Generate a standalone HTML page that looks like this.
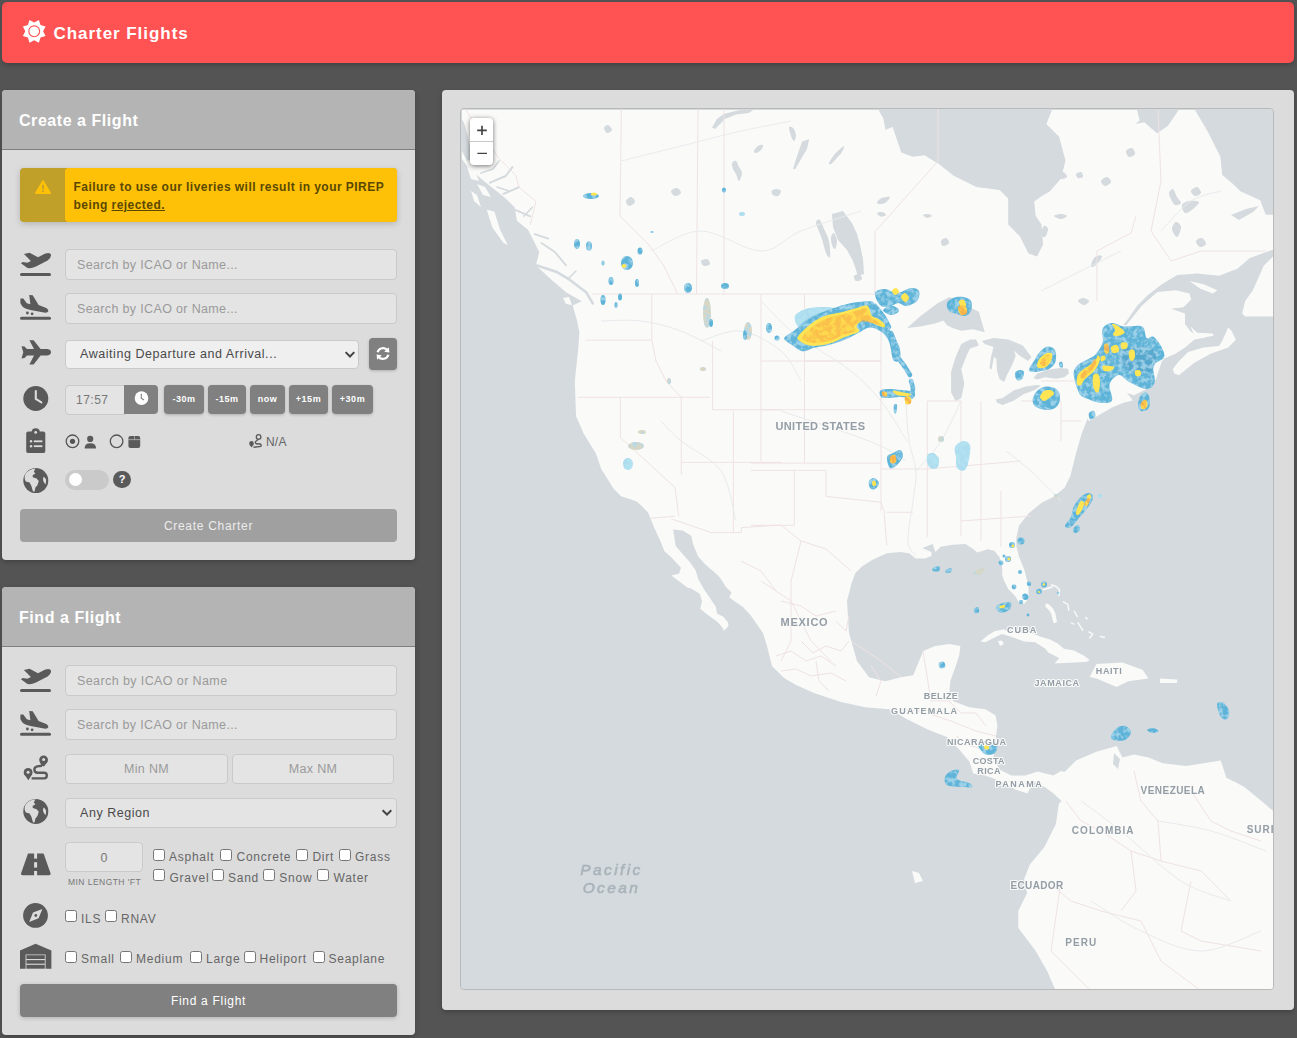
<!DOCTYPE html>
<html><head><meta charset="utf-8">
<style>
*{box-sizing:border-box}
html,body{margin:0;padding:0;width:1297px;height:1038px;overflow:hidden;background:#545454;font-family:"Liberation Sans",sans-serif;position:relative}
.abs{position:absolute}
#hdr{left:2px;top:2px;width:1292px;height:61px;background:#ff5252;border-radius:5px;box-shadow:0 2px 5px rgba(0,0,0,.22)}
#hdr .t{left:51.5px;top:21.5px;font-size:17px;font-weight:bold;color:#fff;letter-spacing:0.95px;line-height:20px;white-space:nowrap}
.panel{position:absolute;left:2px;width:413px;background:#dcdcdc;border-radius:4px;overflow:hidden;box-shadow:0 2px 5px rgba(0,0,0,.22)}
.panel .ph{position:absolute;left:0;top:0;width:100%;height:60px;background:#b4b4b4;border-bottom:1px solid #7f7f7f}
.panel .ph span{position:absolute;left:17px;top:21px;font-size:16px;font-weight:bold;color:#fff;letter-spacing:0.55px;line-height:20px;white-space:nowrap}
#p1{top:90px;height:470px}
#p2{top:587px;height:448px}
#mp{left:442px;top:90px;width:852px;height:920px;background:#dcdcdc;border-radius:4px;box-shadow:0 2px 5px rgba(0,0,0,.22)}
#map{left:460px;top:108px;width:814px;height:882px;background:#d4dadd;border:1px solid #b9b9b9;border-radius:4px;overflow:hidden}
.inp{position:absolute;background:#e4e4e4;border:1px solid #cacaca;border-radius:4px;font-size:12.5px;color:#9a9a9a;line-height:30px;padding-left:11px;white-space:nowrap;letter-spacing:0.35px}
.sel{position:absolute;background:#efefef;border:1px solid #cacaca;border-radius:4px;font-size:12.5px;color:#4a4a4a;line-height:27px;padding-left:14px;white-space:nowrap;letter-spacing:0.55px}
.btn{position:absolute;background:#808080;border-radius:4px;color:#fff;font-weight:bold;text-align:center;box-shadow:0 1px 3px rgba(0,0,0,.2)}
.ico{position:absolute}
.cbr{position:absolute;font-size:13px;color:#666;white-space:nowrap;letter-spacing:0.3px}
.cb{position:absolute;width:12px;height:12px;border:1px solid #767676;border-radius:2.5px;background:#fff}
.tb{top:385px;height:29px;font-size:9px;line-height:29px;letter-spacing:0.5px}
.cbl{position:absolute;font-size:12px;color:#666;white-space:nowrap;line-height:16px;letter-spacing:0.75px;margin-top:1.5px}
.lbl{position:absolute;font-size:13px;color:#6a6a6a;white-space:nowrap;line-height:16px;letter-spacing:0.3px}
</style></head><body>
<div id="hdr" class="abs">
  <svg class="abs" style="left:-2px;top:-2px" width="60" height="60" viewBox="0 0 60 60">
    <polygon fill="#fff" points="38.91,19.94 40.49,25.01 45.56,26.59 43.10,31.30 45.56,36.01 40.49,37.59 38.91,42.66 34.20,40.20 29.49,42.66 27.91,37.59 22.84,36.01 25.30,31.30 22.84,26.59 27.91,25.01 29.49,19.94 34.20,22.40"/>
    <circle cx="34.2" cy="31.3" r="5.4" fill="none" stroke="#ff5252" stroke-width="1.1"/>
  </svg>
  <div class="abs t">Charter Flights</div>
</div>

<div id="p1" class="panel">
  <div class="ph"><span>Create a Flight</span></div>
</div>

<div id="p2" class="panel">
  <div class="ph"><span>Find a Flight</span></div>
</div>

<div id="mp" class="abs"></div>

<!-- ===== CREATE A FLIGHT FORM ===== -->
<div class="abs" style="left:20px;top:168px;width:377px;height:54px;background:#c1a02a;border-radius:4px;box-shadow:0 2px 6px rgba(0,0,0,.18);overflow:hidden">
  <div class="abs" style="left:45px;top:0;width:332px;height:54px;background:#ffc107;border-radius:4px 0 0 4px"></div>
  <svg class="abs" style="left:14px;top:11px" width="18" height="16" viewBox="0 0 18 16"><path d="M9 1.8 L16.3 14.2 L1.7 14.2 Z" fill="#ffc107" stroke="#ffc107" stroke-width="1.4" stroke-linejoin="round"/><rect x="8.15" y="5.8" width="1.7" height="4.6" fill="#c1a02a"/><rect x="8.15" y="11.4" width="1.7" height="1.7" fill="#c1a02a"/></svg>
  <div class="abs" style="left:53.5px;top:9.5px;font-size:12px;font-weight:bold;color:#5a4800;letter-spacing:0.45px;line-height:18px;white-space:nowrap">Failure to use our liveries will result in your PIREP<br>being <u>rejected.</u></div>
</div>

<div class="inp" style="left:65px;top:249px;width:332px;height:31px">Search by ICAO or Name...</div>
<div class="inp" style="left:65px;top:293px;width:332px;height:31px">Search by ICAO or Name...</div>
<div class="sel" style="left:65px;top:340px;width:294px;height:29px">Awaiting Departure and Arrival...</div>
<svg class="abs" style="left:340px;top:345px" width="20" height="16" viewBox="340 345 20 16"><path d="M345.6 352.1 L350 356.5 L354.3 352.1" fill="none" stroke="#444" stroke-width="2"/></svg>
<div class="btn" style="left:369px;top:338px;width:28px;height:32px"></div>
<svg class="abs" style="left:369px;top:338px" width="28" height="32" viewBox="0 0 28 32">
  <path d="M8.6 14.2 A5.8 5.8 0 0 1 18.6 12.2" fill="none" stroke="#fff" stroke-width="2.2"/>
  <path d="M19.9 9.2 L20.4 14.6 L15.2 13.8 Z" fill="#fff"/>
  <path d="M19.4 16.8 A5.8 5.8 0 0 1 9.4 18.8" fill="none" stroke="#fff" stroke-width="2.2"/>
  <path d="M8.1 21.8 L7.6 16.4 L12.8 17.2 Z" fill="#fff"/>
</svg>

<div class="inp" style="left:65px;top:385px;width:60px;height:30px;border-radius:4px 0 0 4px;color:#777;padding-left:10px;letter-spacing:0.5px;font-size:12px;line-height:29px">17:57</div>
<div class="abs" style="left:124px;top:385px;width:34px;height:29px;background:#808080;border-radius:0 4px 4px 0"></div>
<svg class="abs" style="left:130px;top:387px" width="24" height="24" viewBox="130 387 24 24"><circle cx="141.5" cy="398.1" r="6.8" fill="#fff"/><path d="M141.3 393.8 L141.3 398.3 L144 400" fill="none" stroke="#808080" stroke-width="1.1"/></svg>

<div class="btn tb" style="left:164px;width:40px">-30m</div>
<div class="btn tb" style="left:208px;width:38px">-15m</div>
<div class="btn tb" style="left:250px;width:35px">now</div>
<div class="btn tb" style="left:289px;width:39px">+15m</div>
<div class="btn tb" style="left:332px;width:41px">+30m</div>

<svg class="abs" style="left:60px;top:430px" width="90" height="25" viewBox="60 430 90 25">
  <circle cx="72.5" cy="441.3" r="6.3" fill="none" stroke="#555" stroke-width="1.3"/>
  <circle cx="72.5" cy="441.3" r="2.6" fill="#555"/>
  <circle cx="90.2" cy="438.9" r="3.1" fill="#5a5a5a"/>
  <path d="M84.6 448.6 Q84.6 443.2 90.3 443.2 Q96.1 443.2 96.1 448.6 Z" fill="#5a5a5a"/>
  <circle cx="116.6" cy="441.3" r="6.3" fill="none" stroke="#555" stroke-width="1.3"/>
  <rect x="128.4" y="436.1" width="11.8" height="11.8" rx="2" fill="#5a5a5a"/>
  <rect x="128.4" y="439.3" width="11.8" height="0.8" fill="#dcdcdc" opacity="0.7"/>
  <rect x="134" y="436.1" width="0.7" height="3.4" fill="#dcdcdc" opacity="0.7"/>
</svg>
<svg class="abs" style="left:246px;top:432px" width="18" height="18" viewBox="246 432 18 18">
  <circle cx="251.5" cy="443.4" r="2.3" fill="#5a5a5a"/><path d="M249.4 444.5 L251.6 447.6 L253.6 444.5 Z" fill="#5a5a5a"/>
  <circle cx="258.6" cy="436.9" r="2.3" fill="none" stroke="#5a5a5a" stroke-width="1.3"/>
  <path d="M258.5 439.2 L256.5 440.8 Q254.3 442.4 256.3 443.8 L260 444 Q261.8 444.8 260.8 446.4 L253.5 447.3" fill="none" stroke="#5a5a5a" stroke-width="1.4"/>
</svg>
<div class="lbl" style="left:266px;top:434px;font-size:12px;color:#666;letter-spacing:0.2px">N/A</div>

<div class="abs" style="left:65px;top:470px;width:44px;height:20px;background:#cacaca;border-radius:10px"></div>
<div class="abs" style="left:68.8px;top:473.2px;width:13.2px;height:13.2px;background:#fff;border-radius:50%"></div>
<div class="abs" style="left:113.3px;top:470.8px;width:17.4px;height:17.4px;background:#5a5a5a;border-radius:50%;color:#fff;font-weight:bold;font-size:11px;line-height:17.4px;text-align:center">?</div>

<div class="abs" style="left:20px;top:509px;width:377px;height:33px;background:#a0a0a0;border-radius:4px;color:#ececec;font-size:12px;line-height:35px;text-align:center;letter-spacing:0.7px">Create Charter</div>


<!-- ===== LEFT ICONS ===== -->
<svg class="abs" style="left:0;top:0" width="60" height="1038" viewBox="0 0 60 1038">
 <g id="dep" fill="#5a5a5a">
  <rect x="20" y="272.9" width="31" height="3" rx="1.5"/>
  <path d="M23.9 253.9 L29.6 252.8 L38 257.2 L44.8 253.8 Q50.2 251.8 51 254.8 Q51.4 257.6 47.6 260.6 L36 266.6 Q31.4 268.6 27.4 268 L20.9 263.3 L22.8 262 L27.4 262.7 L30.9 260.9 Z"/>
 </g>
 <g id="arr" fill="#5a5a5a">
  <rect x="20" y="316.8" width="31" height="3" rx="1.5"/>
  <circle cx="27.4" cy="313" r="1.4"/><circle cx="32.1" cy="313.8" r="1.4"/>
  <path d="M20.4 298.4 L23.3 298.5 L26.8 303.2 L30.4 304.2 L29.2 295 L32.7 295.2 L38.6 305 L45 307.6 Q48.8 309.2 48.2 311.6 Q47.4 313.2 44 312.6 L30.5 310 Q24.6 308.6 22.2 306.2 L20.4 303.3 Z"/>
 </g>
 <path fill="#5a5a5a" d="M21.5 346.2 L24.5 346.6 L27 349 L34 349 L29.4 340.3 L33.6 340.3 L40.6 349 L47.5 349 Q51 349.6 51 352.2 Q51 354.8 47.5 355.4 L40.6 355.4 L33.6 364.4 L29.4 364.4 L34 355.4 L27 355.4 L24.5 358 L21.5 358.4 L23.3 352.2 Z"/>
 <g><circle cx="35.8" cy="398.5" r="12.5" fill="#5a5a5a"/><path d="M35.8 391 L35.8 399 L41.4 402.4" fill="none" stroke="#dcdcdc" stroke-width="2.1" stroke-linecap="round"/></g>
 <g fill="#5a5a5a">
  <rect x="26.2" y="431.4" width="19.1" height="21.7" rx="2.2"/>
  <path d="M31.6 432 Q31.6 428.2 35.7 428.2 Q39.8 428.2 39.8 432 Z"/>
  <circle cx="35.7" cy="432.4" r="1.4" fill="#dcdcdc"/>
  <circle cx="31" cy="441.3" r="1.2" fill="#dcdcdc"/><circle cx="31" cy="446.2" r="1.2" fill="#dcdcdc"/>
  <rect x="33.8" y="440.4" width="8.6" height="1.8" fill="#dcdcdc"/><rect x="33.8" y="445.3" width="8.6" height="1.8" fill="#dcdcdc"/>
 </g>
 <g id="globe1">
  <circle cx="35.8" cy="480.6" r="12.5" fill="#5a5a5a"/>
  <path fill="#dcdcdc" d="M25.6 473.6 Q29.5 468.8 35.4 468.4 L33.8 471.8 L35.4 473.4 L32.6 475.2 L32.8 477.2 L36.6 478.4 L38.8 481 L37.4 485.2 L35.4 487.6 L34.6 491.4 L33 491.6 L31.4 486 L29.6 482.6 L25.8 481.6 Q24.2 479 24.6 476.6 Z"/>
  <path fill="#dcdcdc" d="M43.4 476.8 Q45.2 477.2 46 479.6 Q46.4 482.8 45.4 484.4 Q43.6 482.4 43 480 Z"/>
 </g>
 <use href="#dep" transform="translate(0,416)"/>
 <use href="#arr" transform="translate(0,416)"/>
 <g>
  <circle cx="28.1" cy="772.4" r="4.4" fill="#5a5a5a"/><path d="M24.2 774.2 L28.4 780.2 L32 774.2 Z" fill="#5a5a5a"/><circle cx="28.1" cy="772.2" r="1.5" fill="#dcdcdc"/>
  <circle cx="43.6" cy="759.8" r="4.4" fill="#5a5a5a"/><path d="M39.8 761.6 L41.4 765.4 L44 766.4 L47.6 761.6 Z" fill="#5a5a5a"/><circle cx="43.6" cy="759.6" r="1.5" fill="#dcdcdc"/>
  <path d="M42 765.8 L37.2 766.4 Q34.4 767.2 34.4 769.6 Q34.4 772.8 37.6 772.8 L44.6 772.8 Q46.8 773.2 46.8 775.6 Q46.8 778.4 44.2 778.4 L31.6 778.4" fill="none" stroke="#5a5a5a" stroke-width="2.4"/>
 </g>
 <use href="#globe1" transform="translate(0,330.8)"/>
 <g fill="#5a5a5a">
  <path d="M28 853.6 L43.6 853.6 L50.6 873.6 Q50.8 875.2 49 875.2 L22.6 875.2 Q20.8 875.2 21 873.6 Z"/>
  <rect x="34.1" y="853" width="3" height="5.6" fill="#dcdcdc"/><rect x="34.1" y="862.2" width="3" height="5.4" fill="#dcdcdc"/><rect x="34.1" y="871" width="3" height="5" fill="#dcdcdc"/>
 </g>
 <g>
  <circle cx="35.5" cy="915.4" r="12.4" fill="#5a5a5a"/>
  <path d="M29.2 922 L33 912.6 L42.4 909 L38.6 918.2 Z" fill="#dcdcdc"/>
  <circle cx="35.8" cy="915.5" r="1.4" fill="#5a5a5a"/>
 </g>
 <g>
  <path d="M20 950.4 L35.6 943.8 L51.4 950.4 L51.4 968.7 L45.6 968.7 L45.6 954.4 L25.6 954.4 L25.6 968.7 L20 968.7 Z" fill="#5a5a5a"/>
  <rect x="26.4" y="955.2" width="18.4" height="3.8" fill="#5a5a5a"/>
  <rect x="26.4" y="960.1" width="18.4" height="3.6" fill="#5a5a5a"/>
  <rect x="26.4" y="964.8" width="18.4" height="3.9" fill="#5a5a5a"/>
 </g>
</svg>

<!-- ===== CHECKBOXES ===== -->
<div class="cb" style="left:153px;top:849px"></div><div class="cbl" style="left:169px;top:847px">Asphalt</div>
<div class="cb" style="left:220px;top:849px"></div><div class="cbl" style="left:236.5px;top:847px">Concrete</div>
<div class="cb" style="left:296px;top:849px"></div><div class="cbl" style="left:312.4px;top:847px">Dirt</div>
<div class="cb" style="left:338.5px;top:849px"></div><div class="cbl" style="left:355px;top:847px">Grass</div>
<div class="cb" style="left:153px;top:869px"></div><div class="cbl" style="left:169.5px;top:868px">Gravel</div>
<div class="cb" style="left:212px;top:869px"></div><div class="cbl" style="left:228px;top:868px">Sand</div>
<div class="cb" style="left:263px;top:869px"></div><div class="cbl" style="left:279.3px;top:868px">Snow</div>
<div class="cb" style="left:317px;top:869px"></div><div class="cbl" style="left:333.5px;top:868px">Water</div>
<div class="cb" style="left:65px;top:910px"></div><div class="cbl" style="left:81px;top:909px">ILS</div>
<div class="cb" style="left:105px;top:910px"></div><div class="cbl" style="left:121px;top:909px">RNAV</div>
<div class="cb" style="left:65px;top:951px"></div><div class="cbl" style="left:81px;top:949px">Small</div>
<div class="cb" style="left:120px;top:951px"></div><div class="cbl" style="left:136px;top:949px">Medium</div>
<div class="cb" style="left:189.5px;top:951px"></div><div class="cbl" style="left:206px;top:949px">Large</div>
<div class="cb" style="left:243.5px;top:951px"></div><div class="cbl" style="left:259.5px;top:949px">Heliport</div>
<div class="cb" style="left:313px;top:951px"></div><div class="cbl" style="left:328.5px;top:949px">Seaplane</div>

<!-- ===== FIND A FLIGHT FORM ===== -->
<div class="inp" style="left:65px;top:665px;width:332px;height:31px;letter-spacing:0.4px">Search by ICAO or Name</div>
<div class="inp" style="left:65px;top:709px;width:332px;height:31px">Search by ICAO or Name...</div>
<div class="inp" style="left:65px;top:754px;width:163px;height:30px;padding:0;text-align:center;line-height:29px">Min NM</div>
<div class="inp" style="left:232px;top:754px;width:162px;height:30px;padding:0;text-align:center;line-height:29px">Max NM</div>
<div class="sel" style="left:65px;top:798px;width:332px;height:30px;background:#e4e4e4;line-height:28px">Any Region</div>
<svg class="abs" style="left:377px;top:805px" width="16" height="16" viewBox="377 805 16 16"><path d="M382.6 810.3 L387 814.5 L391.3 810.3" fill="none" stroke="#444" stroke-width="2"/></svg>
<div class="inp" style="left:65px;top:842px;width:78px;height:30px;padding:0;text-align:center;color:#777;letter-spacing:0;font-size:12.5px">0</div>
<div class="lbl" style="left:68px;top:876px;font-size:8.5px;color:#777;letter-spacing:0.45px;line-height:12px">MIN LENGTH 'FT</div>

<div class="btn" style="left:20px;top:984px;width:377px;height:33px;color:#fff;font-weight:normal;font-size:12px;line-height:34px;letter-spacing:0.7px;box-shadow:0 1px 4px rgba(0,0,0,.2)">Find a Flight</div>

<div id="map" class="abs">
<svg class="abs" style="left:0;top:0" width="814" height="882" viewBox="460 108 814 882">
<defs><filter id="bl" x="-10%" y="-10%" width="120%" height="120%"><feTurbulence type="fractalNoise" baseFrequency="0.22" numOctaves="2" seed="7" result="n"/><feColorMatrix in="n" type="matrix" values="0 0 0 0 0  0 0 0 0 0  0 0 0 0 0  0 0 0 -4 2.3" result="m"/><feFlood flood-color="#a9d9ee" flood-opacity="0.75"/><feComposite in2="m" operator="in" result="lt"/><feComposite in="lt" in2="SourceGraphic" operator="in" result="lt2"/><feMerge result="mg"><feMergeNode in="SourceGraphic"/><feMergeNode in="lt2"/></feMerge><feGaussianBlur in="mg" stdDeviation="0.5"/></filter><filter id="bl2" x="-20%" y="-20%" width="140%" height="140%"><feGaussianBlur stdDeviation="0.5"/></filter><filter id="bl3" x="-10%" y="-10%" width="120%" height="120%"><feTurbulence type="fractalNoise" baseFrequency="0.2" numOctaves="2" seed="11" result="n"/><feColorMatrix in="n" type="matrix" values="0 0 0 0 0  0 0 0 0 0  0 0 0 0 0  0 0 0 -4.5 2.6" result="m"/><feFlood flood-color="#ffe552" flood-opacity="0.85"/><feComposite in2="m" operator="in" result="lt"/><feComposite in="lt" in2="SourceGraphic" operator="in" result="lt2"/><feMerge result="mg"><feMergeNode in="SourceGraphic"/><feMergeNode in="lt2"/></feMerge><feGaussianBlur in="mg" stdDeviation="0.5"/></filter></defs>
<rect x="460" y="108" width="814" height="882" fill="#d4dadd"/>
<polygon fill="#fafaf9" points="461.0,109.0 877.6,109.0 882.2,117.3 884.5,128.8 891.6,126.0 900.3,151.4 911.8,155.7 923.4,154.2 937.9,163.0 952.3,174.5 975.4,186.0 998.6,189.0 1007.2,197.6 1007.2,223.6 1018.8,235.2 1027.5,252.5 1036.0,255.4 1042.0,243.8 1040.5,223.6 1034.7,215.0 1033.2,200.5 1040.0,195.6 1049.0,190.2 1060.0,177.5 1064.5,159.4 1058.1,135.8 1045.4,123.1 1050.9,109.0 1136.0,109.0 1138.7,119.5 1134.2,123.1 1143.3,121.3 1156.0,132.2 1166.8,124.9 1177.7,109.0 1194.0,109.0 1206.7,130.4 1219.4,155.7 1221.2,173.9 1232.0,182.9 1239.3,190.2 1259.2,199.2 1264.7,213.7 1274.0,213.7 1274.0,248.0 1248.8,257.0 1236.4,267.8 1218.0,274.7 1196.4,272.4 1176.3,273.9 1160.9,283.2 1147.0,294.0 1136.2,304.8 1125.4,320.2 1122.3,324.0 1125.4,324.0 1140.8,304.8 1156.3,290.9 1174.8,289.3 1188.6,292.4 1190.2,298.6 1182.5,306.3 1170.1,307.8 1184.0,312.5 1184.0,323.3 1190.2,331.0 1196.4,334.1 1205.6,336.0 1193.3,338.7 1184.0,346.4 1174.8,352.6 1164.0,357.2 1160.9,360.3 1154.7,378.8 1145.5,388.0 1133.1,394.2 1126.0,392.0 1128.3,394.8 1131.7,399.4 1122.5,401.7 1111.0,406.4 1087.8,420.0 1086.7,417.3 1081.0,431.8 1075.1,452.0 1069.4,475.1 1063.6,486.7 1051.8,496.2 1041.0,501.6 1027.5,512.4 1018.0,524.5 1015.3,536.7 1015.3,544.8 1018.0,555.6 1023.4,569.0 1027.5,585.3 1027.5,597.4 1023.4,602.8 1018.0,601.5 1014.0,594.7 1007.2,588.0 1003.2,580.0 1000.5,571.8 1001.2,574.6 1001.2,566.7 998.6,556.2 993.3,549.7 986.8,548.3 976.3,551.6 972.4,548.3 964.5,543.1 951.4,543.8 939.6,545.7 934.4,551.0 931.7,543.1 921.3,547.0 930.4,551.0 930.4,554.9 923.9,557.5 914.7,557.5 908.2,552.3 899.0,551.0 885.9,552.3 871.5,558.8 861.0,565.4 854.4,571.9 850.5,582.4 846.0,600.0 848.0,632.0 856.0,660.0 868.0,676.2 884.1,680.2 900.1,676.2 912.2,674.2 922.2,650.1 934.2,645.1 948.3,643.1 959.3,645.1 958.3,654.1 954.3,666.2 949.3,680.2 948.3,692.2 952.3,700.2 968.3,706.3 984.3,708.3 994.4,714.3 996.4,724.3 994.4,740.3 992.4,756.4 998.4,768.4 1010.4,774.4 1024.4,774.4 1036.5,770.4 1052.5,774.4 1060.0,770.0 1063.6,771.0 1075.1,759.4 1095.4,750.7 1115.6,744.9 1121.4,756.5 1133.0,753.6 1147.4,756.5 1161.8,762.3 1185.0,765.1 1202.3,762.3 1219.7,759.4 1225.4,776.7 1242.8,785.4 1260.1,799.8 1274.0,811.4 1274.0,990.0 1054.9,990.0 1046.2,970.3 1034.7,950.1 1017.3,927.0 1017.3,909.7 1026.0,892.3 1023.1,877.9 1028.9,863.4 1043.4,846.0 1054.9,823.0 1057.8,802.7 1060.5,800.0 1052.5,792.5 1044.5,786.5 1032.5,780.4 1026.4,792.5 1014.4,788.5 1000.4,780.4 984.3,774.4 972.3,772.4 968.3,760.4 958.3,748.4 946.3,736.3 926.2,728.3 906.2,718.3 888.1,708.3 864.1,706.3 840.0,701.0 813.0,692.0 795.0,684.0 783.0,677.0 771.0,665.0 766.0,645.0 762.0,632.0 750.0,614.7 742.0,606.0 733.4,600.2 728.2,596.2 730.5,591.6 724.7,585.8 720.0,578.0 716.3,573.7 704.1,563.3 697.2,555.5 692.0,543.3 690.3,534.7 681.6,529.5 672.1,528.6 674.7,545.1 681.6,552.9 688.5,560.7 694.6,569.3 697.2,578.0 704.1,590.0 709.1,597.3 714.9,606.0 716.0,612.4 722.4,615.8 727.0,621.6 727.6,625.1 723.0,629.7 721.2,626.2 716.0,620.5 706.2,613.5 699.2,607.7 701.0,600.2 698.7,592.7 690.0,587.5 686.8,586.7 677.3,579.7 670.3,574.5 678.1,572.8 679.9,566.7 670.3,556.3 663.4,550.3 660.0,541.6 653.0,526.0 646.9,511.3 640.0,504.3 635.2,500.3 620.1,495.3 612.6,487.7 600.1,467.7 595.1,452.7 582.6,432.6 575.0,415.1 573.8,380.0 577.0,350.0 578.4,331.5 576.2,320.3 571.7,304.6 580.7,300.2 565.0,291.2 549.4,277.8 534.9,264.4 538.2,251.0 531.5,237.6 527.0,228.7 515.9,219.7 513.6,206.3 504.7,197.4 493.5,188.4 482.3,179.5 466.7,166.0 461.0,158.0"/>
<polygon fill="#fafaf9" points="1241.1,312.5 1244.2,300.1 1251.9,289.3 1262.7,264.7 1274.0,253.5 1274.0,315.6 1258.0,315.6 1244.2,315.6"/>
<polygon fill="#fafaf9" points="1171.7,368.0 1177.8,360.3 1187.1,351.0 1202.5,346.4 1218.0,344.9 1221.0,340.2 1227.2,326.4 1230.3,329.4 1234.9,338.7 1227.2,346.4 1210.2,352.6 1193.3,361.8 1177.8,374.2 1173.2,372.6"/>
<polygon fill="#fafaf9" points="1189.4,325.6 1196.4,331.7 1211.8,332.5 1212.5,334.8 1202.5,336.4 1193.3,334.1"/>
<polygon fill="#fafaf9" points="979.6,640.4 986.1,634.8 993.5,630.2 1002.8,628.3 1006.5,630.2 1016.6,632.0 1030.5,632.0 1039.8,635.7 1049.0,638.5 1056.4,642.2 1062.9,647.8 1073.0,649.6 1082.3,654.2 1088.8,658.9 1086.0,660.7 1073.0,661.6 1053.6,662.6 1058.3,657.0 1047.2,651.5 1044.4,647.8 1034.2,641.3 1023.1,640.4 1010.2,635.7 1000.9,633.0 991.7,637.6 984.3,641.3"/>
<polygon fill="#fafaf9" points="997.0,640.0 1001.0,639.4 1002.8,643.0 999.0,645.0"/>
<polygon fill="#fafaf9" points="1088.6,676.0 1095.4,663.0 1121.4,661.6 1141.6,668.8 1147.4,677.5 1127.2,680.3 1115.6,686.1 1095.4,677.5"/>
<polygon fill="#fafaf9" points="1159.0,677.5 1176.3,678.5 1176.0,682.0 1159.0,682.0"/>
<polygon fill="#fafaf9" points="1042.0,680.0 1058.0,679.0 1064.0,683.0 1050.0,684.5"/>
<polygon fill="#fafaf9" points="485.7,208.6 493.5,210.8 499.1,228.7 506.9,244.3 502.5,242.0 491.3,226.4"/>
<polygon fill="#fafaf9" points="911.0,870.0 918.0,872.0 922.0,880.0 914.0,882.0"/>
<polygon fill="#fafaf9" points="1188.6,280.1 1202.5,283.2 1216.4,289.3 1211.8,292.4 1199.4,287.8"/>
<polyline points="1042.4,588.5 1050.8,586.2" fill="none" stroke="#fafaf9" stroke-width="1.8" stroke-linecap="round" stroke-linejoin="round"/>
<polyline points="1050.8,583.9 1055.0,585.5 1058.5,588.5 1057.8,594.7" fill="none" stroke="#fafaf9" stroke-width="1.6" stroke-linecap="round" stroke-linejoin="round"/>
<polyline points="1046.2,604.7 1050.5,609.0 1052.4,613.0 1053.9,620.1" fill="none" stroke="#fafaf9" stroke-width="4" stroke-linecap="round" stroke-linejoin="round"/>
<polyline points="1062.4,600.8 1067.0,603.5 1067.8,609.3" fill="none" stroke="#fafaf9" stroke-width="1.4" stroke-linecap="round" stroke-linejoin="round"/>
<polyline points="1073.2,610.1 1076.3,615.5" fill="none" stroke="#fafaf9" stroke-width="1.4" stroke-linecap="round" stroke-linejoin="round"/>
<polyline points="1077.0,621.7 1081.7,629.4" fill="none" stroke="#fafaf9" stroke-width="1.4" stroke-linecap="round" stroke-linejoin="round"/>
<polyline points="1070.0,621.7 1073.2,623.2" fill="none" stroke="#fafaf9" stroke-width="1.2" stroke-linecap="round" stroke-linejoin="round"/>
<polyline points="1087.8,630.9 1091.7,633.2 1088.6,637.0" fill="none" stroke="#fafaf9" stroke-width="1.4" stroke-linecap="round" stroke-linejoin="round"/>
<polyline points="1099.4,635.5 1103.3,636.3" fill="none" stroke="#fafaf9" stroke-width="1.4" stroke-linecap="round" stroke-linejoin="round"/>
<polyline points="1085.0,616.5 1086.0,617.8" fill="none" stroke="#fafaf9" stroke-width="1.6" stroke-linecap="round" stroke-linejoin="round"/>
<polyline points="489.0,181.7 504.7,175.0 511.4,166.1" fill="none" stroke="#d4dadd" stroke-width="2" stroke-linecap="round" stroke-linejoin="round"/>
<polyline points="502.5,192.9 518.1,186.2" fill="none" stroke="#d4dadd" stroke-width="2" stroke-linecap="round" stroke-linejoin="round"/>
<polyline points="513.6,208.6 529.3,215.3" fill="none" stroke="#d4dadd" stroke-width="1.8" stroke-linecap="round" stroke-linejoin="round"/>
<polyline points="522.6,215.3 531.5,206.3" fill="none" stroke="#d4dadd" stroke-width="1.5" stroke-linecap="round" stroke-linejoin="round"/>
<polyline points="533.7,233.1 547.2,237.6" fill="none" stroke="#d4dadd" stroke-width="1.8" stroke-linecap="round" stroke-linejoin="round"/>
<polyline points="540.4,242.1 553.9,251.0 565.0,264.4" fill="none" stroke="#d4dadd" stroke-width="1.8" stroke-linecap="round" stroke-linejoin="round"/>
<polyline points="536.0,264.4 556.0,271.1 567.3,277.8 585.1,291.2 591.8,302.4" fill="none" stroke="#d4dadd" stroke-width="2.6" stroke-linecap="round" stroke-linejoin="round"/>
<polyline points="567.3,277.8 575.0,270.0" fill="none" stroke="#d4dadd" stroke-width="1.5" stroke-linecap="round" stroke-linejoin="round"/>
<polyline points="480.0,172.0 492.0,168.0 498.0,160.0" fill="none" stroke="#d4dadd" stroke-width="1.8" stroke-linecap="round" stroke-linejoin="round"/>
<polyline points="496.0,186.0 508.0,190.0" fill="none" stroke="#d4dadd" stroke-width="1.5" stroke-linecap="round" stroke-linejoin="round"/>
<polygon fill="#fafaf9" points="466.0,166.0 474.0,170.0 478.0,180.0 470.0,178.0"/>
<polygon fill="#fafaf9" points="476.0,183.0 484.0,186.0 490.0,196.0 482.0,194.0"/>
<polygon fill="#fafaf9" points="470.0,190.0 476.0,194.0 480.0,206.0 473.0,200.0"/>
<polygon fill="#fafaf9" points="562.0,297.0 568.0,296.0 571.0,304.0 565.0,303.0"/>
<polygon fill="#d4dadd" points="711.0,126.5 716.0,118.0 722.6,113.0 738.8,109.0 752.0,109.0 748.0,112.0 735.0,113.5 724.0,118.0 714.0,128.0"/>
<polygon fill="#d4dadd" points="792.0,168.0 797.0,152.0 801.2,140.4 808.2,138.0 806.0,148.0 800.0,158.0 794.3,168.0"/>
<polygon fill="#d4dadd" points="831.0,213.0 842.0,210.0 851.0,222.0 856.0,233.0 859.0,244.0 862.0,258.0 863.0,273.0 857.0,275.0 852.0,260.0 846.0,249.0 837.0,239.0 832.0,226.0"/>
<polygon fill="#d4dadd" points="906.1,326.9 919.3,315.2 936.9,302.0 948.6,296.1 954.5,299.0 963.3,297.6 969.1,306.4 977.9,310.8 980.8,321.0 983.8,331.3 972.0,328.3 960.3,329.8 951.5,326.9 945.7,324.0 942.7,319.6 934.0,322.5 919.3,325.4"/>
<polygon fill="#d4dadd" points="975.0,338.6 977.9,344.5 969.1,347.4 966.2,353.2 960.3,367.9 963.3,382.5 960.3,397.2 954.5,400.1 950.1,391.3 950.1,370.8 954.5,356.2 960.3,343.0 969.1,338.6"/>
<polygon fill="#d4dadd" points="980.8,340.0 992.5,337.1 1007.2,338.6 1021.8,344.5 1030.6,356.2 1027.0,360.0 1017.8,353.9 1013.1,349.5 1014.6,355.0 1011.6,363.1 1006.0,374.0 1003.1,380.9 998.5,378.0 996.0,370.0 995.4,358.0 993.0,356.0 990.5,368.5 988.4,367.0 990.0,356.0 992.5,346.0 983.8,343.0"/>
<polygon fill="#d4dadd" points="994.6,398.6 1001.6,397.0 1013.1,389.3 1024.7,385.5 1036.3,384.0 1040.1,384.7 1033.2,389.3 1022.4,393.2 1013.1,399.4 1001.6,404.0 996.2,401.7"/>
<polygon fill="#d4dadd" points="1032.4,377.0 1036.3,372.4 1047.8,368.5 1059.4,367.0 1067.1,367.8 1067.9,372.4 1063.2,376.2 1055.5,377.8 1044.0,376.2 1036.3,378.6"/>
<polygon fill="#d4dadd" points="1113.0,752.0 1119.0,758.0 1117.0,768.0 1112.0,763.0"/>
<polygon fill="#d4dadd" points="461.0,118.0 464.0,124.0 468.0,140.0 471.0,158.0 466.0,160.0 461.0,150.0"/>
<polygon fill="#d4dadd" points="1230.0,214.0 1245.0,208.0 1258.0,205.0 1252.0,211.0 1238.0,219.0"/>
<path fill="#d4dadd" d="M788.0,126.0 C788.3,124.7 790.8,125.7 792.0,127.0 C793.2,128.3 794.8,131.8 795.0,134.0 C795.2,136.2 793.8,139.8 793.0,140.0 C792.2,140.2 790.8,137.3 790.0,135.0 C789.2,132.7 787.7,127.3 788.0,126.0 Z"/>
<path fill="#d4dadd" d="M828.0,162.0 C828.5,160.5 831.3,156.2 833.0,154.0 C834.7,151.8 836.3,150.5 838.0,149.0 C839.7,147.5 842.5,144.7 843.0,145.0 C843.5,145.3 842.3,148.8 841.0,151.0 C839.7,153.2 836.8,156.0 835.0,158.0 C833.2,160.0 831.2,162.3 830.0,163.0 C828.8,163.7 827.5,163.5 828.0,162.0 Z"/>
<path fill="#d4dadd" d="M753.0,150.0 C753.3,148.8 755.5,146.0 757.0,145.0 C758.5,144.0 761.5,143.3 762.0,144.0 C762.5,144.7 761.2,147.7 760.0,149.0 C758.8,150.3 756.2,151.8 755.0,152.0 C753.8,152.2 752.7,151.2 753.0,150.0 Z"/>
<path fill="#d4dadd" d="M731.0,162.0 C731.5,160.7 733.8,159.3 735.0,160.0 C736.2,160.7 737.0,164.0 738.0,166.0 C739.0,168.0 741.0,169.7 741.0,172.0 C741.0,174.3 739.0,179.8 738.0,180.0 C737.0,180.2 736.0,175.0 735.0,173.0 C734.0,171.0 732.7,169.8 732.0,168.0 C731.3,166.2 730.5,163.3 731.0,162.0 Z"/>
<path fill="#d4dadd" d="M770.5,190.0 C771.0,189.0 773.4,188.0 775.0,188.0 C776.6,188.0 779.7,188.8 780.0,190.0 C780.3,191.2 778.3,194.3 777.0,195.0 C775.7,195.7 773.1,194.8 772.0,194.0 C770.9,193.2 770.0,191.0 770.5,190.0 Z"/>
<path fill="#d4dadd" d="M876.0,201.0 C876.5,200.0 878.8,197.8 881.0,197.0 C883.2,196.2 888.5,195.2 889.0,196.0 C889.5,196.8 885.8,200.8 884.0,202.0 C882.2,203.2 879.3,203.2 878.0,203.0 C876.7,202.8 875.5,202.0 876.0,201.0 Z"/>
<path fill="#d4dadd" d="M876.0,212.0 C876.2,211.2 879.5,210.7 881.0,211.0 C882.5,211.3 885.2,213.2 885.0,214.0 C884.8,214.8 881.5,215.9 880.0,215.6 C878.5,215.3 875.8,212.8 876.0,212.0 Z"/>
<path fill="#d4dadd" d="M922.0,214.0 C922.2,213.4 925.5,212.8 927.0,213.0 C928.5,213.2 931.2,214.4 931.0,215.0 C930.8,215.6 927.5,216.9 926.0,216.7 C924.5,216.5 921.8,214.6 922.0,214.0 Z"/>
<path fill="#d4dadd" d="M815.0,221.0 C815.3,219.5 817.7,217.8 819.0,219.0 C820.3,220.2 821.5,224.5 823.0,228.0 C824.5,231.5 827.0,235.3 828.0,240.0 C829.0,244.7 829.5,254.0 829.0,256.0 C828.5,258.0 826.3,255.0 825.0,252.0 C823.7,249.0 822.3,242.0 821.0,238.0 C819.7,234.0 818.0,230.8 817.0,228.0 C816.0,225.2 814.7,222.5 815.0,221.0 Z"/>
<path fill="#d4dadd" d="M830.0,236.0 C830.3,234.0 832.0,231.3 833.0,232.0 C834.0,232.7 835.8,237.3 836.0,240.0 C836.2,242.7 834.8,247.3 834.0,248.0 C833.2,248.7 831.7,246.0 831.0,244.0 C830.3,242.0 829.7,238.0 830.0,236.0 Z"/>
<path fill="#d4dadd" d="M1053.0,215.0 C1053.0,214.2 1057.8,213.0 1060.0,213.0 C1062.2,213.0 1066.0,214.2 1066.0,215.0 C1066.0,215.8 1062.2,218.0 1060.0,218.0 C1057.8,218.0 1053.0,215.8 1053.0,215.0 Z"/>
<path fill="#d4dadd" d="M1090.0,264.0 C1090.3,262.3 1092.2,257.5 1094.0,256.0 C1095.8,254.5 1100.5,254.0 1101.0,255.0 C1101.5,256.0 1098.5,260.2 1097.0,262.0 C1095.5,263.8 1093.2,265.7 1092.0,266.0 C1090.8,266.3 1089.7,265.7 1090.0,264.0 Z"/>
<path fill="#d4dadd" d="M1181.0,204.0 C1181.7,202.0 1185.2,200.5 1188.0,200.0 C1190.8,199.5 1197.3,199.7 1198.0,201.0 C1198.7,202.3 1194.3,206.2 1192.0,208.0 C1189.7,209.8 1185.8,212.7 1184.0,212.0 C1182.2,211.3 1180.3,206.0 1181.0,204.0 Z"/>
<path fill="#d4dadd" d="M1168.0,192.0 C1168.3,190.3 1170.7,187.3 1172.0,188.0 C1173.3,188.7 1174.7,193.7 1176.0,196.0 C1177.3,198.3 1180.3,200.7 1180.0,202.0 C1179.7,203.3 1175.7,204.7 1174.0,204.0 C1172.3,203.3 1171.0,200.0 1170.0,198.0 C1169.0,196.0 1167.7,193.7 1168.0,192.0 Z"/>
<path fill="#d4dadd" d="M1190.0,190.0 C1190.3,188.5 1194.3,185.7 1196.0,186.0 C1197.7,186.3 1200.3,190.5 1200.0,192.0 C1199.7,193.5 1195.7,195.3 1194.0,195.0 C1192.3,194.7 1189.7,191.5 1190.0,190.0 Z"/>
<path fill="#d4dadd" d="M1055.0,173.0 C1055.5,171.8 1060.2,170.5 1062.0,171.0 C1063.8,171.5 1066.5,174.8 1066.0,176.0 C1065.5,177.2 1060.8,178.5 1059.0,178.0 C1057.2,177.5 1054.5,174.2 1055.0,173.0 Z"/>
<path fill="#d4dadd" d="M1075.0,173.0 C1075.5,172.0 1078.8,170.5 1080.0,171.0 C1081.2,171.5 1082.5,175.0 1082.0,176.0 C1081.5,177.0 1078.2,177.5 1077.0,177.0 C1075.8,176.5 1074.5,174.0 1075.0,173.0 Z"/>
<path fill="#d4dadd" d="M1077.0,300.0 C1076.8,298.8 1080.2,297.0 1082.0,297.0 C1083.8,297.0 1087.8,298.8 1088.0,300.0 C1088.2,301.2 1084.8,304.0 1083.0,304.0 C1081.2,304.0 1077.2,301.2 1077.0,300.0 Z"/>
<path fill="#d4dadd" d="M1040.0,233.0 C1039.8,231.2 1041.8,225.8 1043.0,225.0 C1044.2,224.2 1046.8,226.2 1047.0,228.0 C1047.2,229.8 1045.2,235.2 1044.0,236.0 C1042.8,236.8 1040.2,234.8 1040.0,233.0 Z"/>
<path fill="#d4dadd" d="M960.0,130.0 C960.2,128.5 963.5,125.8 965.0,126.0 C966.5,126.2 969.2,129.5 969.0,131.0 C968.8,132.5 965.5,135.2 964.0,135.0 C962.5,134.8 959.8,131.5 960.0,130.0 Z"/>
<path fill="#d4dadd" d="M985.0,116.0 C985.2,114.5 988.5,111.8 990.0,112.0 C991.5,112.2 994.2,115.5 994.0,117.0 C993.8,118.5 990.5,121.2 989.0,121.0 C987.5,120.8 984.8,117.5 985.0,116.0 Z"/>
<path fill="#d4dadd" d="M1100.0,180.0 C1100.3,178.5 1104.3,175.8 1106.0,176.0 C1107.7,176.2 1110.3,179.5 1110.0,181.0 C1109.7,182.5 1105.7,185.2 1104.0,185.0 C1102.3,184.8 1099.7,181.5 1100.0,180.0 Z"/>
<path fill="#d4dadd" d="M1125.0,150.0 C1125.5,148.5 1129.5,146.5 1131.0,147.0 C1132.5,147.5 1134.5,151.5 1134.0,153.0 C1133.5,154.5 1129.5,156.5 1128.0,156.0 C1126.5,155.5 1124.5,151.5 1125.0,150.0 Z"/>
<path fill="#d4dadd" d="M1171.0,228.0 C1170.8,225.5 1173.5,221.3 1175.0,221.0 C1176.5,220.7 1179.8,223.5 1180.0,226.0 C1180.2,228.5 1177.5,235.7 1176.0,236.0 C1174.5,236.3 1171.2,230.5 1171.0,228.0 Z"/>
<path fill="#d4dadd" d="M1195.0,240.0 C1195.3,238.5 1199.3,236.5 1201.0,237.0 C1202.7,237.5 1205.3,241.5 1205.0,243.0 C1204.7,244.5 1200.7,246.5 1199.0,246.0 C1197.3,245.5 1194.7,241.5 1195.0,240.0 Z"/>
<path fill="#d4dadd" d="M670.0,190.0 C670.3,188.7 674.3,186.7 676.0,187.0 C677.7,187.3 680.3,190.7 680.0,192.0 C679.7,193.3 675.7,195.3 674.0,195.0 C672.3,194.7 669.7,191.3 670.0,190.0 Z"/>
<path fill="#d4dadd" d="M625.0,200.0 C625.3,198.5 628.5,195.8 630.0,196.0 C631.5,196.2 634.3,199.5 634.0,201.0 C633.7,202.5 629.5,205.2 628.0,205.0 C626.5,204.8 624.7,201.5 625.0,200.0 Z"/>
<path fill="#d4dadd" d="M700.0,260.0 C700.5,258.8 704.5,257.5 706.0,258.0 C707.5,258.5 709.5,261.8 709.0,263.0 C708.5,264.2 704.5,265.5 703.0,265.0 C701.5,264.5 699.5,261.2 700.0,260.0 Z"/>
<path fill="#d4dadd" d="M853.0,275.0 C853.5,273.8 856.7,272.5 858.0,273.0 C859.3,273.5 861.5,276.8 861.0,278.0 C860.5,279.2 856.3,280.5 855.0,280.0 C853.7,279.5 852.5,276.2 853.0,275.0 Z"/>
<path fill="#d4dadd" d="M940.0,240.0 C940.5,238.7 943.7,236.7 945.0,237.0 C946.3,237.3 948.5,240.7 948.0,242.0 C947.5,243.3 943.3,245.3 942.0,245.0 C940.7,244.7 939.5,241.3 940.0,240.0 Z"/>
<path fill="#d4dadd" d="M603.0,127.0 C603.2,125.7 605.7,123.7 607.0,124.0 C608.3,124.3 611.2,127.7 611.0,129.0 C610.8,130.3 607.3,132.3 606.0,132.0 C604.7,131.7 602.8,128.3 603.0,127.0 Z"/>
<g fill="none" stroke="#f0e2e3" stroke-width="1">
<polyline points="464.3,108.0 497.6,157.0 515.0,174.5 517.8,186.0 535.0,200.5 529.4,223.6"/>
<polyline points="620.4,108.0 619.0,215.0 633.4,229.4 647.9,243.8 662.3,264.0 676.8,293.0"/>
<polyline points="697.0,108.0 695.5,293.0"/>
<polyline points="723.0,108.0 723.0,293.0"/>
<polyline points="591.5,293.0 874.0,293.0"/>
<polyline points="874.0,293.0 874.0,230.8 937.0,160.0"/>
<polyline points="576.3,396.3 709.0,396.3"/>
<polyline points="619.4,396.3 619.4,436.4 674.0,486.5 677.8,515.3"/>
<polyline points="649.0,517.3 674.0,515.3"/>
<polyline points="670.2,517.8 710.3,531.6 740.4,531.6 740.4,526.6 780.0,524.0 800.0,540.0 825.0,548.0 850.0,570.0"/>
<polyline points="680.3,396.3 680.3,474.0"/>
<polyline points="680.3,461.4 780.0,461.4"/>
<polyline points="732.4,410.0 732.4,531.6"/>
<polyline points="711.6,340.0 711.6,408.8 780.0,408.8"/>
<polyline points="584.3,339.2 650.8,339.2 650.8,293.0"/>
<polyline points="650.8,339.2 655.0,360.0 665.0,380.0 680.3,396.3"/>
<polyline points="750.0,462.1 880.0,462.1"/>
<polyline points="803.5,408.7 803.5,462.1"/>
<polyline points="793.4,469.4 793.4,524.3 750.0,524.3"/>
<polyline points="825.0,469.4 825.0,495.4 880.0,501.2 883.0,509.8 885.8,544.5"/>
<polyline points="750.0,469.4 825.0,469.4"/>
<polyline points="880.0,414.5 880.0,509.8"/>
<polyline points="880.0,468.0 926.3,468.0"/>
<polyline points="885.8,511.3 911.8,511.3"/>
<polyline points="926.3,400.0 926.3,535.8"/>
<polyline points="760.0,293.0 760.0,460.0"/>
<polyline points="803.5,293.0 803.5,408.7"/>
<polyline points="760.0,408.7 880.0,408.7"/>
<polyline points="760.0,360.0 880.0,360.0"/>
<polyline points="803.5,360.0 880.0,360.0"/>
<polyline points="880.0,330.0 880.0,414.5"/>
<polyline points="926.3,400.0 960.0,400.0"/>
<polyline points="960.0,400.0 960.0,535.0"/>
<polyline points="980.0,400.0 980.0,540.0"/>
<polyline points="926.3,468.0 1020.0,460.0"/>
<polyline points="960.0,520.0 1030.0,515.0"/>
<polyline points="1000.0,490.0 1000.0,546.0"/>
<polyline points="1020.0,400.0 1060.0,400.0 1060.0,440.0"/>
<polyline points="1040.0,380.0 1080.0,380.0"/>
<polyline points="1060.0,420.0 1080.0,420.0"/>
<polyline points="937.0,160.0 937.0,108.0"/>
<polyline points="1096.0,300.0 1096.0,250.0 1130.0,232.0 1135.0,215.0"/>
<polyline points="1157.0,109.0 1160.0,180.0 1150.0,230.0 1170.0,260.0 1200.0,250.0 1265.0,250.0"/>
<polyline points="760.0,580.0 790.0,600.0 810.0,640.0 830.0,660.0"/>
<polyline points="800.0,540.0 790.0,580.0 790.0,640.0 780.0,660.0"/>
<polyline points="850.0,640.0 880.0,660.0 900.0,676.0"/>
<polyline points="922.0,650.0 930.0,700.0 950.0,700.0"/>
<polyline points="900.0,708.0 920.0,710.0 950.0,720.0 975.0,730.0 995.0,735.0"/>
<polyline points="775.0,655.0 790.0,650.0 805.0,660.0 820.0,655.0 835.0,665.0"/>
<polyline points="780.0,670.0 795.0,668.0 810.0,675.0 830.0,672.0 845.0,680.0"/>
<polyline points="800.0,640.0 812.0,652.0 825.0,645.0 840.0,650.0 848.0,640.0"/>
<polyline points="815.0,660.0 818.0,680.0 828.0,690.0"/>
<polyline points="835.0,620.0 845.0,630.0 848.0,615.0"/>
<polyline points="780.0,600.0 800.0,605.0 815.0,615.0 835.0,610.0"/>
<polyline points="740.0,560.0 760.0,570.0 775.0,590.0"/>
<polyline points="870.0,665.0 880.0,680.0 875.0,695.0"/>
<polyline points="948.0,700.0 960.0,712.0 975.0,712.0 985.0,725.0"/>
<polyline points="955.0,735.0 970.0,745.0 990.0,750.0"/>
<polyline points="1065.0,800.0 1080.0,820.0 1100.0,830.0 1130.0,850.0 1160.0,860.0 1200.0,870.0 1230.0,900.0"/>
<polyline points="1133.0,770.0 1140.0,800.0 1157.0,820.0 1160.0,860.0"/>
<polyline points="1190.0,790.0 1210.0,820.0 1230.0,830.0 1260.0,840.0"/>
<polyline points="1045.0,880.0 1070.0,900.0 1100.0,910.0 1140.0,920.0 1160.0,960.0 1200.0,990.0"/>
<polyline points="1130.0,850.0 1135.0,890.0 1120.0,910.0"/>
<polyline points="1060.0,880.0 1050.0,950.0 1090.0,990.0"/>
<polyline points="1190.0,880.0 1180.0,930.0 1200.0,940.0 1260.0,950.0"/>
</g>
<g fill="none" stroke="#e8ebed" stroke-width="1">
<path d="M905.0,402.0 C905.5,408.3 906.3,428.7 908.0,440.0 C909.7,451.3 914.3,460.0 915.0,470.0 C915.7,480.0 913.3,488.3 912.0,500.0 C910.7,511.7 906.5,530.8 907.0,540.0 C907.5,549.2 913.7,552.5 915.0,555.0"/>
<path d="M760.0,300.0 C765.0,305.0 780.0,321.7 790.0,330.0 C800.0,338.3 810.0,343.3 820.0,350.0 C830.0,356.7 840.0,361.7 850.0,370.0 C860.0,378.3 870.7,388.3 880.0,400.0 C889.3,411.7 901.7,433.3 906.0,440.0"/>
<path d="M700.0,340.0 C706.7,338.3 726.7,328.3 740.0,330.0 C753.3,331.7 770.0,341.7 780.0,350.0 C790.0,358.3 796.7,375.0 800.0,380.0"/>
<path d="M660.0,420.0 C663.3,423.3 670.0,431.7 680.0,440.0 C690.0,448.3 710.8,456.7 720.0,470.0 C729.2,483.3 732.5,511.7 735.0,520.0"/>
<path d="M960.0,400.0 C956.7,406.7 947.5,428.3 940.0,440.0 C932.5,451.7 919.2,465.0 915.0,470.0"/>
<path d="M780.0,410.0 C790.0,413.3 823.3,424.2 840.0,430.0 C856.7,435.8 869.2,440.0 880.0,445.0 C890.8,450.0 900.8,457.5 905.0,460.0"/>
<path d="M620.0,160.0 C626.7,158.3 646.7,153.3 660.0,150.0 C673.3,146.7 686.7,143.3 700.0,140.0 C713.3,136.7 725.0,133.3 740.0,130.0 C755.0,126.7 781.7,121.7 790.0,120.0"/>
<path d="M650.0,250.0 C658.3,246.7 681.7,230.0 700.0,230.0 C718.3,230.0 743.3,250.0 760.0,250.0 C776.7,250.0 783.3,236.7 800.0,230.0 C816.7,223.3 850.0,213.3 860.0,210.0"/>
<path d="M600.0,320.0 C606.7,320.0 626.7,318.3 640.0,320.0 C653.3,321.7 666.7,325.0 680.0,330.0 C693.3,335.0 713.3,346.7 720.0,350.0"/>
<path d="M1005.0,450.0 C1009.2,453.3 1020.8,461.7 1030.0,470.0 C1039.2,478.3 1055.0,495.0 1060.0,500.0"/>
<path d="M1080.0,800.0 C1086.7,805.0 1103.3,816.7 1120.0,830.0 C1136.7,843.3 1161.7,868.3 1180.0,880.0 C1198.3,891.7 1221.7,896.7 1230.0,900.0"/>
<path d="M1090.0,900.0 C1098.3,905.0 1121.7,921.7 1140.0,930.0 C1158.3,938.3 1180.0,950.0 1200.0,950.0 C1220.0,950.0 1250.0,933.3 1260.0,930.0"/>
<path d="M1157.0,820.0 C1165.8,821.7 1192.0,825.0 1210.0,830.0 C1228.0,835.0 1255.8,846.7 1265.0,850.0"/>
<path d="M1160.0,230.0 C1165.0,225.0 1180.0,206.7 1190.0,200.0 C1200.0,193.3 1215.0,191.7 1220.0,190.0"/>
<path d="M1040.0,290.0 C1046.7,286.7 1066.7,276.7 1080.0,270.0 C1093.3,263.3 1113.3,253.3 1120.0,250.0"/>
</g>
<g filter="url(#bl)">
<path d="M794.0,315.0 C795.2,312.0 800.7,309.5 805.0,308.0 C809.3,306.5 815.2,306.0 820.0,306.0 C824.8,306.0 832.3,306.0 834.0,308.0 C835.7,310.0 833.7,315.3 830.0,318.0 C826.3,320.7 817.3,322.7 812.0,324.0 C806.7,325.3 801.0,327.5 798.0,326.0 C795.0,324.5 792.8,318.0 794.0,315.0 Z" fill="#b3e2f1" opacity="1.0"/>
<path d="M926.0,455.0 C926.7,452.7 930.0,451.5 932.0,452.0 C934.0,452.5 937.3,455.5 938.0,458.0 C938.7,460.5 937.7,465.7 936.0,467.0 C934.3,468.3 929.7,468.0 928.0,466.0 C926.3,464.0 925.3,457.3 926.0,455.0 Z" fill="#b3e2f1" opacity="1.0"/>
<path d="M954.0,446.0 C955.2,443.3 959.5,440.3 962.0,440.0 C964.5,439.7 968.0,441.0 969.0,444.0 C970.0,447.0 968.8,453.8 968.0,458.0 C967.2,462.2 966.0,467.5 964.0,469.0 C962.0,470.5 957.5,469.2 956.0,467.0 C954.5,464.8 955.3,459.5 955.0,456.0 C954.7,452.5 952.8,448.7 954.0,446.0 Z" fill="#b3e2f1" opacity="1.0"/>
<path d="M1078.6,387.0 C1080.1,385.6 1085.9,384.7 1088.0,385.5 C1090.1,386.3 1091.6,390.2 1091.3,392.0 C1091.0,393.8 1088.0,395.7 1086.0,396.0 C1084.0,396.3 1080.2,395.5 1079.0,394.0 C1077.8,392.5 1077.1,388.4 1078.6,387.0 Z" fill="#b3e2f1" opacity="1.0"/>
<path d="M783.2,337.2 C783.6,334.9 789.0,332.9 793.0,329.7 C797.0,326.5 802.3,320.9 807.0,317.8 C811.7,314.7 816.1,313.3 821.0,311.3 C825.9,309.3 830.7,307.5 836.1,305.9 C841.5,304.3 847.6,302.5 853.4,301.6 C859.2,300.7 867.3,299.8 870.7,300.5 C874.1,301.2 871.9,303.4 873.9,305.9 C875.9,308.4 880.3,312.4 882.5,315.6 C884.7,318.8 885.1,321.7 886.9,325.3 C888.7,328.9 891.3,333.6 893.3,337.2 C895.3,340.8 897.8,343.3 898.7,346.9 C899.6,350.5 899.8,356.8 898.7,358.8 C897.6,360.8 894.1,361.9 892.3,358.8 C890.5,355.7 890.0,345.1 888.0,340.4 C886.0,335.7 883.6,333.0 880.4,330.7 C877.1,328.4 872.3,326.2 868.5,326.4 C864.7,326.6 861.7,329.8 857.7,331.8 C853.8,333.8 849.6,336.3 844.8,338.3 C839.9,340.3 834.0,342.3 828.6,343.7 C823.2,345.1 816.9,345.8 812.4,346.9 C807.9,348.0 805.2,350.7 801.6,350.2 C798.0,349.7 793.9,345.9 790.8,343.7 C787.7,341.5 782.8,339.5 783.2,337.2 Z" fill="#5db4d8" opacity="1.0"/>
<path d="M874.0,292.0 C874.8,289.3 880.3,288.0 884.0,288.0 C887.7,288.0 891.7,292.2 896.0,292.0 C900.3,291.8 906.3,287.3 910.0,287.0 C913.7,286.7 917.0,287.8 918.0,290.0 C919.0,292.2 918.2,297.5 916.0,300.0 C913.8,302.5 908.2,304.7 905.0,305.0 C901.8,305.3 899.8,301.8 897.0,302.0 C894.2,302.2 891.0,305.7 888.0,306.0 C885.0,306.3 881.3,306.3 879.0,304.0 C876.7,301.7 873.2,294.7 874.0,292.0 Z" fill="#5db4d8" opacity="1.0"/>
<path d="M882.0,309.0 C882.3,307.5 889.3,304.8 892.0,305.0 C894.7,305.2 898.3,308.5 898.0,310.0 C897.7,311.5 892.7,314.2 890.0,314.0 C887.3,313.8 881.7,310.5 882.0,309.0 Z" fill="#5db4d8" opacity="1.0"/>
<path d="M874.0,305.0 C875.3,306.7 879.7,311.5 882.0,315.0 C884.3,318.5 887.0,324.2 888.0,326.0" fill="none" stroke="#5db4d8" stroke-width="4.5" stroke-linecap="round"/>
<path d="M890.0,332.0 C890.7,333.7 893.0,338.7 894.0,342.0 C895.0,345.3 895.7,350.3 896.0,352.0" fill="none" stroke="#5db4d8" stroke-width="4.5" stroke-linecap="round"/>
<path d="M898.0,358.0 C899.0,359.3 902.2,363.3 904.0,366.0 C905.8,368.7 908.2,372.7 909.0,374.0" fill="none" stroke="#5db4d8" stroke-width="4.5" stroke-linecap="round"/>
<path d="M910.0,380.0 C910.3,381.3 912.0,385.3 912.0,388.0 C912.0,390.7 910.3,394.7 910.0,396.0" fill="none" stroke="#5db4d8" stroke-width="4.5" stroke-linecap="round"/>
<path d="M879.0,390.0 C880.0,388.7 882.5,388.2 886.0,388.0 C889.5,387.8 895.5,388.5 900.0,389.0 C904.5,389.5 911.0,389.7 913.0,391.0 C915.0,392.3 914.2,396.2 912.0,397.0 C909.8,397.8 904.3,396.0 900.0,396.0 C895.7,396.0 889.3,397.0 886.0,397.0 C882.7,397.0 881.2,397.2 880.0,396.0 C878.8,394.8 878.0,391.3 879.0,390.0 Z" fill="#5db4d8" opacity="1.0"/>
<path d="M893.0,404.0 C893.5,402.8 895.7,402.7 896.0,404.0 C896.3,405.3 895.5,410.8 895.0,412.0 C894.5,413.2 893.3,412.3 893.0,411.0 C892.7,409.7 892.5,405.2 893.0,404.0 Z" fill="#5db4d8" opacity="1.0"/>
<path d="M946.0,302.0 C946.7,299.8 949.3,298.0 952.0,297.0 C954.7,296.0 959.0,295.5 962.0,296.0 C965.0,296.5 968.7,297.7 970.0,300.0 C971.3,302.3 971.0,307.5 970.0,310.0 C969.0,312.5 966.3,314.5 964.0,315.0 C961.7,315.5 958.7,313.8 956.0,313.0 C953.3,312.2 949.7,311.8 948.0,310.0 C946.3,308.2 945.3,304.2 946.0,302.0 Z" fill="#5db4d8" opacity="1.0"/>
<path d="M886.0,456.0 C886.5,453.5 889.8,453.2 892.0,452.0 C894.2,450.8 897.3,448.5 899.0,449.0 C900.7,449.5 902.5,452.5 902.0,455.0 C901.5,457.5 898.2,462.0 896.0,464.0 C893.8,466.0 890.7,468.3 889.0,467.0 C887.3,465.7 885.5,458.5 886.0,456.0 Z" fill="#5db4d8" opacity="1.0"/>
<path d="M868.0,480.0 C868.7,478.3 871.3,476.7 873.0,477.0 C874.7,477.3 877.8,480.2 878.0,482.0 C878.2,483.8 875.5,487.2 874.0,488.0 C872.5,488.8 870.0,488.3 869.0,487.0 C868.0,485.7 867.3,481.7 868.0,480.0 Z" fill="#5db4d8" opacity="1.0"/>
<path d="M1101.7,327.7 C1103.2,324.4 1107.4,322.4 1110.9,322.0 C1114.4,321.6 1117.5,324.8 1122.5,325.4 C1127.5,326.0 1137.2,323.5 1141.0,325.4 C1144.8,327.3 1143.7,335.3 1145.6,337.0 C1147.5,338.7 1150.0,334.3 1152.5,335.8 C1155.0,337.3 1158.8,342.7 1160.6,346.2 C1162.3,349.7 1164.3,353.5 1163.0,356.6 C1161.7,359.7 1154.0,360.6 1152.5,364.7 C1151.0,368.8 1154.9,377.1 1153.7,381.0 C1152.5,384.9 1149.8,387.9 1145.6,387.9 C1141.4,387.9 1132.9,383.2 1128.3,380.9 C1123.7,378.6 1121.2,373.6 1117.9,374.0 C1114.6,374.4 1109.8,379.0 1108.6,383.2 C1107.4,387.4 1112.5,396.3 1111.0,399.4 C1109.5,402.5 1103.3,401.9 1099.4,401.7 C1095.5,401.5 1091.3,399.8 1087.8,398.3 C1084.3,396.8 1081.1,396.6 1078.6,392.5 C1076.1,388.4 1073.2,378.6 1072.8,374.0 C1072.4,369.4 1073.7,367.4 1076.2,364.7 C1078.7,362.0 1084.7,359.7 1087.8,357.8 C1090.9,355.9 1092.4,355.9 1094.7,353.2 C1097.0,350.5 1100.5,345.9 1101.7,341.6 C1102.9,337.4 1100.2,331.0 1101.7,327.7 Z" fill="#5db4d8" opacity="1.0"/>
<path d="M1120.0,350.0 C1123.0,346.7 1134.2,344.7 1140.0,345.0 C1145.8,345.3 1153.3,347.8 1155.0,352.0 C1156.7,356.2 1153.3,366.7 1150.0,370.0 C1146.7,373.3 1139.7,372.8 1135.0,372.0 C1130.3,371.2 1124.5,368.7 1122.0,365.0 C1119.5,361.3 1117.0,353.3 1120.0,350.0 Z" fill="#4f9fc6" opacity="0.6"/>
<path d="M1028.0,369.0 C1028.0,367.2 1031.3,362.8 1033.0,360.0 C1034.7,357.2 1036.0,354.3 1038.0,352.0 C1040.0,349.7 1042.7,346.8 1045.0,346.0 C1047.3,345.2 1050.3,345.8 1052.0,347.0 C1053.7,348.2 1054.7,350.5 1055.0,353.0 C1055.3,355.5 1055.2,359.5 1054.0,362.0 C1052.8,364.5 1050.3,366.7 1048.0,368.0 C1045.7,369.3 1042.5,369.5 1040.0,370.0 C1037.5,370.5 1035.0,371.2 1033.0,371.0 C1031.0,370.8 1028.0,370.8 1028.0,369.0 Z" fill="#5db4d8" opacity="1.0"/>
<path d="M1058.0,362.0 C1058.3,361.2 1060.3,360.3 1061.0,361.0 C1061.7,361.7 1062.3,365.2 1062.0,366.0 C1061.7,366.8 1059.7,366.7 1059.0,366.0 C1058.3,365.3 1057.7,362.8 1058.0,362.0 Z" fill="#5db4d8" opacity="1.0"/>
<path d="M1014.0,372.0 C1014.5,370.3 1017.5,369.2 1019.0,369.0 C1020.5,368.8 1022.7,369.5 1023.0,371.0 C1023.3,372.5 1022.2,376.7 1021.0,378.0 C1019.8,379.3 1017.2,380.0 1016.0,379.0 C1014.8,378.0 1013.5,373.7 1014.0,372.0 Z" fill="#5db4d8" opacity="1.0"/>
<path d="M1032.0,397.0 C1032.7,394.5 1034.7,390.9 1037.0,389.0 C1039.3,387.1 1043.0,385.7 1046.0,385.5 C1049.0,385.3 1052.8,386.4 1055.0,388.0 C1057.2,389.6 1058.7,392.3 1059.0,395.0 C1059.3,397.7 1058.5,401.7 1057.0,404.0 C1055.5,406.3 1052.8,407.9 1050.0,408.6 C1047.2,409.3 1042.8,408.8 1040.0,408.0 C1037.2,407.2 1034.3,405.8 1033.0,404.0 C1031.7,402.2 1031.3,399.5 1032.0,397.0 Z" fill="#5db4d8" opacity="1.0"/>
<path d="M1140.0,394.0 C1141.5,392.0 1144.5,391.0 1146.0,392.0 C1147.5,393.0 1148.8,397.3 1149.0,400.0 C1149.2,402.7 1148.5,406.3 1147.0,408.0 C1145.5,409.7 1141.7,410.7 1140.0,410.0 C1138.3,409.3 1137.0,406.7 1137.0,404.0 C1137.0,401.3 1138.5,396.0 1140.0,394.0 Z" fill="#5db4d8" opacity="1.0"/>
<path d="M1088.0,412.0 C1088.7,410.7 1092.0,409.3 1093.0,410.0 C1094.0,410.7 1094.7,414.7 1094.0,416.0 C1093.3,417.3 1090.0,418.7 1089.0,418.0 C1088.0,417.3 1087.3,413.3 1088.0,412.0 Z" fill="#5db4d8" opacity="1.0"/>
<path d="M1064.0,525.0 C1064.0,523.3 1068.5,519.3 1070.0,516.0 C1071.5,512.7 1071.3,508.3 1073.0,505.0 C1074.7,501.7 1077.7,498.2 1080.0,496.0 C1082.3,493.8 1085.0,492.2 1087.0,492.0 C1089.0,491.8 1091.5,493.3 1092.0,495.0 C1092.5,496.7 1091.3,499.5 1090.0,502.0 C1088.7,504.5 1086.0,507.5 1084.0,510.0 C1082.0,512.5 1080.3,514.3 1078.0,517.0 C1075.7,519.7 1072.3,524.7 1070.0,526.0 C1067.7,527.3 1064.0,526.7 1064.0,525.0 Z" fill="#5db4d8" opacity="1.0"/>
<path d="M1072.0,528.0 C1072.5,526.7 1075.8,523.8 1077.0,524.0 C1078.2,524.2 1079.5,527.7 1079.0,529.0 C1078.5,530.3 1075.2,532.2 1074.0,532.0 C1072.8,531.8 1071.5,529.3 1072.0,528.0 Z" fill="#5db4d8" opacity="1.0"/>
<path d="M1097.0,494.0 C1097.3,493.3 1099.3,492.7 1100.0,493.0 C1100.7,493.3 1101.3,495.3 1101.0,496.0 C1100.7,496.7 1098.7,497.3 1098.0,497.0 C1097.3,496.7 1096.7,494.7 1097.0,494.0 Z" fill="#b3e2f1" opacity="1.0"/>
<circle cx="1020" cy="540" r="3.5" fill="#5db4d8"/>
<circle cx="1011" cy="544" r="3" fill="#5db4d8"/>
<circle cx="1007" cy="558" r="3" fill="#5db4d8"/>
<circle cx="1000" cy="562" r="2.4" fill="#5db4d8"/>
<circle cx="1019" cy="571" r="2" fill="#5db4d8"/>
<circle cx="1013" cy="586" r="2.4" fill="#5db4d8"/>
<circle cx="1024" cy="595" r="2.6" fill="#5db4d8"/>
<circle cx="1020" cy="601" r="2" fill="#5db4d8"/>
<circle cx="1043" cy="583.5" r="3" fill="#5db4d8"/>
<circle cx="1038" cy="590.5" r="2.8" fill="#5db4d8"/>
<circle cx="1024.5" cy="596" r="3" fill="#5db4d8"/>
<circle cx="1028" cy="582.8" r="2.2" fill="#5db4d8"/>
<circle cx="1057" cy="592" r="1.2" fill="#5db4d8"/>
<circle cx="1027" cy="614" r="1.4" fill="#5db4d8"/>
<circle cx="1003" cy="555" r="1.5" fill="#5db4d8"/>
<path d="M995.8,605.0 C996.8,603.8 999.6,602.5 1002.0,602.0 C1004.4,601.5 1009.0,600.8 1010.0,602.0 C1011.0,603.2 1009.7,607.4 1008.0,609.0 C1006.3,610.6 1002.0,611.6 1000.0,611.6 C998.0,611.6 996.7,610.1 996.0,609.0 C995.3,607.9 994.8,606.2 995.8,605.0 Z" fill="#5db4d8" opacity="1.0"/>
<path d="M932.0,567.0 C933.0,566.2 937.0,564.5 938.0,565.0 C939.0,565.5 939.0,569.2 938.0,570.0 C937.0,570.8 933.0,570.5 932.0,570.0 C931.0,569.5 931.0,567.8 932.0,567.0 Z" fill="#5db4d8" opacity="1.0"/>
<path d="M945.0,569.0 C945.8,568.2 949.2,566.7 950.0,567.0 C950.8,567.3 950.8,570.2 950.0,571.0 C949.2,571.8 945.8,572.3 945.0,572.0 C944.2,571.7 944.2,569.8 945.0,569.0 Z" fill="#5db4d8" opacity="1.0"/>
<path d="M972.0,572.0 C972.7,571.0 976.0,568.8 978.0,568.0 C980.0,567.2 983.7,566.2 984.0,567.0 C984.3,567.8 981.7,571.8 980.0,573.0 C978.3,574.2 975.3,574.2 974.0,574.0 C972.7,573.8 971.3,573.0 972.0,572.0 Z" fill="#d9d7c4" opacity="1.0"/>
<path d="M973.0,608.0 C973.5,607.0 976.2,605.5 977.0,606.0 C977.8,606.5 978.5,610.0 978.0,611.0 C977.5,612.0 974.8,612.5 974.0,612.0 C973.2,611.5 972.5,609.0 973.0,608.0 Z" fill="#5db4d8" opacity="1.0"/>
<path d="M977.0,742.0 C978.2,740.7 982.9,739.7 986.0,740.0 C989.1,740.3 994.4,742.0 995.7,744.0 C997.0,746.0 995.8,750.4 994.0,752.0 C992.2,753.6 987.5,754.3 985.0,753.6 C982.5,752.9 980.3,749.9 979.0,748.0 C977.7,746.1 975.8,743.3 977.0,742.0 Z" fill="#5db4d8" opacity="1.0"/>
<path d="M944.0,776.0 C944.7,773.7 947.7,771.2 950.0,770.0 C952.3,768.8 957.0,767.7 958.0,769.0 C959.0,770.3 954.3,775.8 956.0,778.0 C957.7,780.2 965.5,780.7 968.0,782.0 C970.5,783.3 972.3,785.3 971.0,786.0 C969.7,786.7 964.2,786.3 960.0,786.0 C955.8,785.7 948.7,785.7 946.0,784.0 C943.3,782.3 943.3,778.3 944.0,776.0 Z" fill="#5db4d8" opacity="1.0"/>
<path d="M938.0,662.0 C938.7,661.0 942.0,660.3 943.0,661.0 C944.0,661.7 944.7,665.0 944.0,666.0 C943.3,667.0 940.0,667.7 939.0,667.0 C938.0,666.3 937.3,663.0 938.0,662.0 Z" fill="#5db4d8" opacity="1.0"/>
<path d="M1110.0,735.0 C1110.5,733.0 1113.7,728.7 1116.0,727.0 C1118.3,725.3 1121.7,724.3 1124.0,725.0 C1126.3,725.7 1130.0,728.7 1130.0,731.0 C1130.0,733.3 1126.8,737.7 1124.0,739.0 C1121.2,740.3 1115.3,739.7 1113.0,739.0 C1110.7,738.3 1109.5,737.0 1110.0,735.0 Z" fill="#5db4d8" opacity="1.0"/>
<path d="M1146.0,729.0 C1146.0,728.2 1150.1,726.8 1152.0,727.0 C1153.9,727.2 1157.5,729.2 1157.5,730.0 C1157.5,730.8 1153.9,732.2 1152.0,732.0 C1150.1,731.8 1146.0,729.8 1146.0,729.0 Z" fill="#5db4d8" opacity="1.0"/>
<path d="M1216.0,703.0 C1216.3,700.6 1220.0,700.4 1222.0,701.6 C1224.0,702.8 1227.3,707.3 1228.0,710.0 C1228.7,712.7 1227.3,717.0 1226.0,718.0 C1224.7,719.0 1221.7,718.5 1220.0,716.0 C1218.3,713.5 1215.7,705.4 1216.0,703.0 Z" fill="#5db4d8" opacity="1.0"/>
<ellipse cx="590" cy="195" rx="8" ry="3" fill="#5db4d8"/>
<ellipse cx="576" cy="243" rx="3" ry="5" fill="#5db4d8"/>
<ellipse cx="588" cy="245" rx="3" ry="4.5" fill="#5db4d8"/>
<ellipse cx="626" cy="262" rx="6" ry="7" fill="#5db4d8"/>
<ellipse cx="639" cy="250" rx="2.5" ry="3.5" fill="#5db4d8"/>
<ellipse cx="602" cy="262" rx="1.5" ry="2.5" fill="#5db4d8"/>
<ellipse cx="610" cy="280" rx="2.5" ry="4" fill="#5db4d8"/>
<ellipse cx="636" cy="282" rx="2" ry="4" fill="#5db4d8"/>
<ellipse cx="602" cy="299" rx="2.5" ry="5" fill="#5db4d8"/>
<ellipse cx="619" cy="296" rx="2" ry="3.5" fill="#5db4d8"/>
<ellipse cx="615" cy="304" rx="1.5" ry="3" fill="#5db4d8"/>
<ellipse cx="687" cy="287" rx="4" ry="5" fill="#5db4d8"/>
<ellipse cx="706" cy="312" rx="4" ry="15" fill="#d9d7c4"/>
<ellipse cx="710" cy="322" rx="2" ry="4" fill="#5db4d8"/>
<ellipse cx="724" cy="285" rx="4" ry="3" fill="#5db4d8"/>
<ellipse cx="747" cy="330" rx="4" ry="9" fill="#d9d7c4"/>
<ellipse cx="744" cy="334" rx="2" ry="5" fill="#5db4d8"/>
<ellipse cx="651" cy="231" rx="1.5" ry="1" fill="#5db4d8"/>
<ellipse cx="723" cy="189" rx="2" ry="2.5" fill="#5db4d8"/>
<ellipse cx="741" cy="213" rx="3" ry="2" fill="#b3e2f1"/>
<ellipse cx="668" cy="380" rx="2" ry="3" fill="#d9d7c4"/>
<ellipse cx="635" cy="445" rx="8" ry="4" fill="#d9d7c4"/>
<ellipse cx="641" cy="431" rx="4" ry="2" fill="#d9d7c4"/>
<ellipse cx="627" cy="463" rx="5" ry="6" fill="#b3e2f1"/>
<ellipse cx="702" cy="368" rx="3" ry="2" fill="#d9d7c4"/>
<ellipse cx="940" cy="438" rx="3" ry="3" fill="#d9d7c4"/>
<ellipse cx="1055" cy="495" rx="2" ry="2" fill="#d9d7c4"/>
<ellipse cx="768" cy="327" rx="3" ry="5" fill="#5db4d8"/>
<ellipse cx="776" cy="337" rx="2.5" ry="2.5" fill="#5db4d8"/>
</g>
<g filter="url(#bl2)">
<path d="M797.3,335.0 C799.5,331.8 807.7,324.4 812.4,321.0 C817.1,317.6 820.6,316.1 825.3,314.5 C830.0,312.9 835.3,312.6 840.4,311.3 C845.5,310.1 851.3,308.1 855.6,307.0 C859.9,305.9 863.9,303.6 866.4,304.8 C868.9,306.1 868.9,312.3 870.7,314.5 C872.5,316.7 875.1,316.4 877.2,317.8 C879.4,319.2 882.7,321.8 883.6,323.2 C884.5,324.6 884.1,326.4 882.5,326.4 C880.9,326.4 877.3,324.4 873.9,323.2 C870.5,321.9 865.0,318.5 862.0,318.9 C859.0,319.2 856.3,323.3 855.6,325.3 C854.9,327.3 859.7,328.9 857.7,330.7 C855.7,332.5 848.6,334.1 843.7,336.1 C838.9,338.1 834.0,341.2 828.6,342.6 C823.2,344.1 816.2,345.2 811.3,344.8 C806.4,344.4 801.7,342.0 799.4,340.4 C797.1,338.8 795.1,338.2 797.3,335.0 Z" fill="#ffe552" opacity="1.0"/>
<path d="M900.0,296.0 C900.0,294.5 902.7,291.8 904.0,292.0 C905.3,292.2 908.0,295.5 908.0,297.0 C908.0,298.5 905.3,301.2 904.0,301.0 C902.7,300.8 900.0,297.5 900.0,296.0 Z" fill="#ffe552" opacity="1.0"/>
<path d="M891.0,290.0 C891.2,288.8 893.8,286.8 895.0,287.0 C896.2,287.2 898.2,289.8 898.0,291.0 C897.8,292.2 895.2,294.2 894.0,294.0 C892.8,293.8 890.8,291.2 891.0,290.0 Z" fill="#ffe552" opacity="1.0"/>
<path d="M892.0,390.0 C892.7,389.5 897.0,390.5 900.0,391.0 C903.0,391.5 909.0,392.3 910.0,393.0 C911.0,393.7 908.3,394.8 906.0,395.0 C903.7,395.2 898.3,394.8 896.0,394.0 C893.7,393.2 891.3,390.5 892.0,390.0 Z" fill="#ffe552" opacity="1.0"/>
<path d="M958.0,300.0 C958.5,298.8 961.8,298.2 963.0,299.0 C964.2,299.8 965.5,303.8 965.0,305.0 C964.5,306.2 961.2,306.8 960.0,306.0 C958.8,305.2 957.5,301.2 958.0,300.0 Z" fill="#ffe552" opacity="1.0"/>
<path d="M871.0,481.0 C871.3,480.2 873.3,479.5 874.0,480.0 C874.7,480.5 875.3,483.2 875.0,484.0 C874.7,484.8 872.7,485.5 872.0,485.0 C871.3,484.5 870.7,481.8 871.0,481.0 Z" fill="#ffe552" opacity="1.0"/>
<path d="M1097.0,354.3 C1096.2,354.6 1095.8,358.1 1094.0,360.0 C1092.2,361.9 1088.5,364.2 1086.0,366.0 C1083.5,367.8 1080.6,369.3 1079.0,371.0 C1077.4,372.7 1076.7,374.0 1076.2,376.0 C1075.7,378.0 1075.6,381.9 1076.2,383.2 C1076.8,384.5 1078.7,384.9 1080.0,384.0 C1081.3,383.1 1082.3,379.8 1084.0,378.0 C1085.7,376.2 1088.0,375.0 1090.0,373.0 C1092.0,371.0 1094.5,368.5 1096.0,366.0 C1097.5,363.5 1098.8,359.9 1099.0,358.0 C1099.2,356.1 1097.8,354.0 1097.0,354.3 Z" fill="#ffe552" opacity="1.0"/>
<path d="M1092.4,374.0 C1093.2,372.2 1095.9,372.0 1097.0,373.0 C1098.1,374.0 1098.8,377.2 1099.0,380.0 C1099.2,382.8 1098.7,388.2 1098.0,390.0 C1097.3,391.8 1095.7,392.0 1094.7,391.0 C1093.7,390.0 1092.4,386.8 1092.0,384.0 C1091.6,381.2 1091.6,375.8 1092.4,374.0 Z" fill="#ffe552" opacity="1.0"/>
<path d="M1101.7,365.0 C1102.2,364.1 1104.1,364.5 1106.0,364.7 C1107.9,364.9 1112.5,365.2 1113.2,366.0 C1113.9,366.8 1111.7,368.7 1110.0,369.4 C1108.3,370.1 1104.4,370.7 1103.0,370.0 C1101.6,369.3 1101.2,365.9 1101.7,365.0 Z" fill="#ffe552" opacity="1.0"/>
<path d="M1111.0,323.0 C1111.3,322.2 1113.9,323.2 1116.0,324.5 C1118.1,325.8 1123.3,329.3 1123.6,331.0 C1123.9,332.7 1119.9,334.2 1118.0,334.7 C1116.1,335.2 1112.7,334.9 1112.0,334.0 C1111.3,333.1 1114.2,330.8 1114.0,329.0 C1113.8,327.2 1110.7,323.8 1111.0,323.0 Z" fill="#ffe552" opacity="1.0"/>
<path d="M1110.0,346.0 C1110.7,344.7 1114.7,343.3 1116.0,344.0 C1117.3,344.7 1118.7,348.7 1118.0,350.0 C1117.3,351.3 1113.3,352.7 1112.0,352.0 C1110.7,351.3 1109.3,347.3 1110.0,346.0 Z" fill="#ffe552" opacity="1.0"/>
<path d="M1120.0,342.0 C1120.8,341.0 1125.0,341.2 1126.0,342.0 C1127.0,342.8 1126.8,346.0 1126.0,347.0 C1125.2,348.0 1122.0,348.8 1121.0,348.0 C1120.0,347.2 1119.2,343.0 1120.0,342.0 Z" fill="#ffe552" opacity="1.0"/>
<path d="M1128.3,350.0 C1129.1,348.8 1132.0,348.0 1133.0,349.0 C1134.0,350.0 1134.3,354.2 1134.0,356.0 C1133.7,357.8 1132.0,360.0 1131.0,360.0 C1130.0,360.0 1128.5,357.7 1128.0,356.0 C1127.5,354.3 1127.5,351.2 1128.3,350.0 Z" fill="#ffe552" opacity="1.0"/>
<path d="M1134.0,370.0 C1134.7,369.1 1138.0,368.7 1139.0,369.4 C1140.0,370.1 1140.5,373.1 1139.8,374.0 C1139.1,374.9 1136.0,375.7 1135.0,375.0 C1134.0,374.3 1133.3,370.9 1134.0,370.0 Z" fill="#ffe552" opacity="1.0"/>
<path d="M1100.0,356.0 C1100.7,355.2 1103.3,354.5 1104.0,355.0 C1104.7,355.5 1104.7,358.2 1104.0,359.0 C1103.3,359.8 1100.7,360.5 1100.0,360.0 C1099.3,359.5 1099.3,356.8 1100.0,356.0 Z" fill="#ffe552" opacity="1.0"/>
<path d="M1036.0,364.0 C1036.2,362.3 1037.3,359.0 1039.0,357.0 C1040.7,355.0 1044.0,352.7 1046.0,352.0 C1048.0,351.3 1050.3,351.7 1051.0,353.0 C1051.7,354.3 1051.0,357.8 1050.0,360.0 C1049.0,362.2 1047.0,364.8 1045.0,366.0 C1043.0,367.2 1039.5,367.3 1038.0,367.0 C1036.5,366.7 1035.8,365.7 1036.0,364.0 Z" fill="#ffe552" opacity="1.0"/>
<path d="M1039.0,396.0 C1039.0,394.3 1041.2,391.1 1043.0,390.0 C1044.8,388.9 1048.3,388.8 1050.0,389.3 C1051.7,389.8 1053.3,391.7 1053.0,393.0 C1052.7,394.3 1049.7,395.8 1048.0,397.0 C1046.3,398.2 1044.5,400.2 1043.0,400.0 C1041.5,399.8 1039.0,397.7 1039.0,396.0 Z" fill="#ffe552" opacity="1.0"/>
<path d="M1075.0,512.0 C1075.0,510.5 1076.2,507.0 1077.0,505.0 C1077.8,503.0 1079.0,500.5 1080.0,500.0 C1081.0,499.5 1082.8,500.5 1083.0,502.0 C1083.2,503.5 1082.0,507.0 1081.0,509.0 C1080.0,511.0 1078.0,513.5 1077.0,514.0 C1076.0,514.5 1075.0,513.5 1075.0,512.0 Z" fill="#ffe552" opacity="1.0"/>
<path d="M1086.0,495.0 C1086.3,494.2 1088.3,492.7 1089.0,493.0 C1089.7,493.3 1090.3,496.2 1090.0,497.0 C1089.7,497.8 1087.7,498.3 1087.0,498.0 C1086.3,497.7 1085.7,495.8 1086.0,495.0 Z" fill="#ffe552" opacity="1.0"/>
<circle cx="1012" cy="545" r="1.4" fill="#ffe552"/>
<circle cx="1008" cy="558" r="1.5" fill="#ffe552"/>
<circle cx="1043" cy="583.5" r="1.2" fill="#ffe552"/>
<circle cx="1038" cy="591" r="1" fill="#ffe552"/>
<path d="M999.0,605.0 C999.8,604.5 1003.3,603.7 1004.0,604.0 C1004.7,604.3 1003.8,606.5 1003.0,607.0 C1002.2,607.5 999.7,607.3 999.0,607.0 C998.3,606.7 998.2,605.5 999.0,605.0 Z" fill="#ffe552" opacity="1.0"/>
<path d="M983.0,744.0 C983.5,743.3 986.2,743.3 987.0,744.0 C987.8,744.7 988.5,747.3 988.0,748.0 C987.5,748.7 984.8,748.7 984.0,748.0 C983.2,747.3 982.5,744.7 983.0,744.0 Z" fill="#ffe552" opacity="1.0"/>
<ellipse cx="593" cy="193" rx="3" ry="1.5" fill="#ffe552"/>
<ellipse cx="623" cy="265" rx="2.2" ry="2" fill="#ffe552"/>
</g>
<g filter="url(#bl3)">
<path d="M802.0,335.0 C803.8,332.5 809.8,327.0 814.0,324.0 C818.2,321.0 822.3,318.8 827.0,317.0 C831.7,315.2 837.2,314.8 842.0,313.5 C846.8,312.2 852.2,310.5 856.0,309.5 C859.8,308.5 862.8,306.6 865.0,307.5 C867.2,308.4 867.2,312.9 869.0,315.0 C870.8,317.1 874.2,318.5 876.0,320.0 C877.8,321.5 880.7,323.7 880.0,324.0 C879.3,324.3 875.2,322.6 872.0,322.0 C868.8,321.4 864.2,320.0 861.0,320.5 C857.8,321.0 854.2,323.4 853.0,325.0 C851.8,326.6 855.8,328.5 854.0,330.0 C852.2,331.5 846.3,332.3 842.0,334.0 C837.7,335.7 833.0,338.7 828.0,340.0 C823.0,341.3 816.2,342.2 812.0,342.0 C807.8,341.8 804.7,340.2 803.0,339.0 C801.3,337.8 800.2,337.5 802.0,335.0 Z" fill="#f8b24a" opacity="0.72"/>
<path d="M904.0,396.0 C904.7,394.8 908.0,395.0 909.0,396.0 C910.0,397.0 910.7,400.8 910.0,402.0 C909.3,403.2 906.0,404.0 905.0,403.0 C904.0,402.0 903.3,397.2 904.0,396.0 Z" fill="#f8b24a" opacity="1.0"/>
<path d="M881.0,391.0 C881.5,390.3 884.2,390.3 885.0,391.0 C885.8,391.7 886.5,394.3 886.0,395.0 C885.5,395.7 882.8,395.7 882.0,395.0 C881.2,394.3 880.5,391.7 881.0,391.0 Z" fill="#f8b24a" opacity="1.0"/>
<path d="M957.0,306.0 C957.7,304.5 962.5,304.0 964.0,305.0 C965.5,306.0 966.7,310.5 966.0,312.0 C965.3,313.5 961.5,315.0 960.0,314.0 C958.5,313.0 956.3,307.5 957.0,306.0 Z" fill="#f8b24a" opacity="1.0"/>
<path d="M889.0,456.0 C889.7,454.7 893.0,453.2 894.0,454.0 C895.0,454.8 895.7,459.7 895.0,461.0 C894.3,462.3 891.0,462.8 890.0,462.0 C889.0,461.2 888.3,457.3 889.0,456.0 Z" fill="#f8b24a" opacity="1.0"/>
<path d="M1094.0,358.0 C1093.0,358.3 1091.0,362.8 1089.0,365.0 C1087.0,367.2 1083.7,369.2 1082.0,371.0 C1080.3,372.8 1078.8,375.0 1079.0,376.0 C1079.2,377.0 1081.2,378.0 1083.0,377.0 C1084.8,376.0 1088.0,372.3 1090.0,370.0 C1092.0,367.7 1094.3,365.0 1095.0,363.0 C1095.7,361.0 1095.0,357.7 1094.0,358.0 Z" fill="#f8b24a" opacity="0.85"/>
<path d="M1103.0,344.0 C1103.5,342.5 1106.2,341.8 1107.0,343.0 C1107.8,344.2 1108.5,349.5 1108.0,351.0 C1107.5,352.5 1104.8,353.2 1104.0,352.0 C1103.2,350.8 1102.5,345.5 1103.0,344.0 Z" fill="#f8b24a" opacity="0.9"/>
<path d="M1039.0,363.0 C1038.8,361.5 1041.5,357.5 1043.0,356.0 C1044.5,354.5 1047.0,353.5 1048.0,354.0 C1049.0,354.5 1049.7,357.2 1049.0,359.0 C1048.3,360.8 1045.7,364.3 1044.0,365.0 C1042.3,365.7 1039.2,364.5 1039.0,363.0 Z" fill="#f8b24a" opacity="0.85"/>
<path d="M1140.0,402.0 C1140.7,400.5 1144.0,398.3 1145.0,399.0 C1146.0,399.7 1146.7,404.5 1146.0,406.0 C1145.3,407.5 1142.0,408.7 1141.0,408.0 C1140.0,407.3 1139.3,403.5 1140.0,402.0 Z" fill="#f8b24a" opacity="1.0"/>
<path d="M1083.0,503.0 C1083.2,501.7 1086.0,497.7 1087.0,497.0 C1088.0,496.3 1089.2,497.7 1089.0,499.0 C1088.8,500.3 1087.0,504.3 1086.0,505.0 C1085.0,505.7 1082.8,504.3 1083.0,503.0 Z" fill="#f8b24a" opacity="0.9"/>
</g>
<g font-family="Liberation Sans, sans-serif" font-weight="bold" fill="#939da5" stroke="#fafaf9" stroke-width="2.2" paint-order="stroke" stroke-linejoin="round">
<text x="774.5" y="429.3" font-size="11" letter-spacing="0.32" text-anchor="start">UNITED STATES</text>
<text x="779.5" y="625" font-size="11" letter-spacing="0.75" text-anchor="start">MEXICO</text>
<text x="1006" y="632.3" font-size="9" letter-spacing="1.1" text-anchor="start">CUBA</text>
<text x="922.8" y="698.2" font-size="9" letter-spacing="0.4" text-anchor="start">BELIZE</text>
<text x="890.1" y="712.7" font-size="9" letter-spacing="1.15" text-anchor="start">GUATEMALA</text>
<text x="1033.5" y="684.6" font-size="9" letter-spacing="0.6" text-anchor="start">JAMAICA</text>
<text x="1094.8" y="673" font-size="9" letter-spacing="0.6" text-anchor="start">HAITI</text>
<text x="945.9" y="744" font-size="9" letter-spacing="0.5" text-anchor="start">NICARAGUA</text>
<text x="971.7" y="763.4" font-size="9" letter-spacing="0.25" text-anchor="start">COSTA</text>
<text x="976.3" y="772.8" font-size="9" letter-spacing="0.4" text-anchor="start">RICA</text>
<text x="994.4" y="786" font-size="9" letter-spacing="1.5" text-anchor="start">PANAMA</text>
<text x="1139.6" y="792.6" font-size="10" letter-spacing="0.45" text-anchor="start">VENEZUELA</text>
<text x="1070.8" y="833" font-size="10" letter-spacing="1.05" text-anchor="start">COLOMBIA</text>
<text x="1245.7" y="832.2" font-size="10" letter-spacing="1.0" text-anchor="start">SURI</text>
<text x="1009.5" y="888" font-size="10" letter-spacing="0.35" text-anchor="start">ECUADOR</text>
<text x="1064.2" y="945" font-size="10" letter-spacing="1.05" text-anchor="start">PERU</text>
</g>
<g font-family="Liberation Sans, sans-serif" font-weight="normal" font-style="italic" fill="#a9b3ba" stroke="#a9b3ba" stroke-width="0.55" font-size="15.5" letter-spacing="2.4" text-anchor="middle">
<text x="610.5" y="874.4">Pacific</text><text x="610.5" y="892.3">Ocean</text></g>
</svg>
<div class="abs" style="left:9px;top:9px;width:23px;height:47px;border-radius:4px;background:#fff;box-shadow:0 1px 5px rgba(0,0,0,.55)"></div>
<div class="abs" style="left:9px;top:32px;width:23px;height:1px;background:#c8c8c8"></div>
<svg class="abs" style="left:9px;top:9px" width="23" height="47" viewBox="470 118 23 47"><path d="M477.2 130.4 H486.8 M482 125.8 V135" stroke="#444" stroke-width="1.7"/><path d="M477.4 153.4 H487" stroke="#444" stroke-width="1.3"/></svg>
</div>
</body></html>
